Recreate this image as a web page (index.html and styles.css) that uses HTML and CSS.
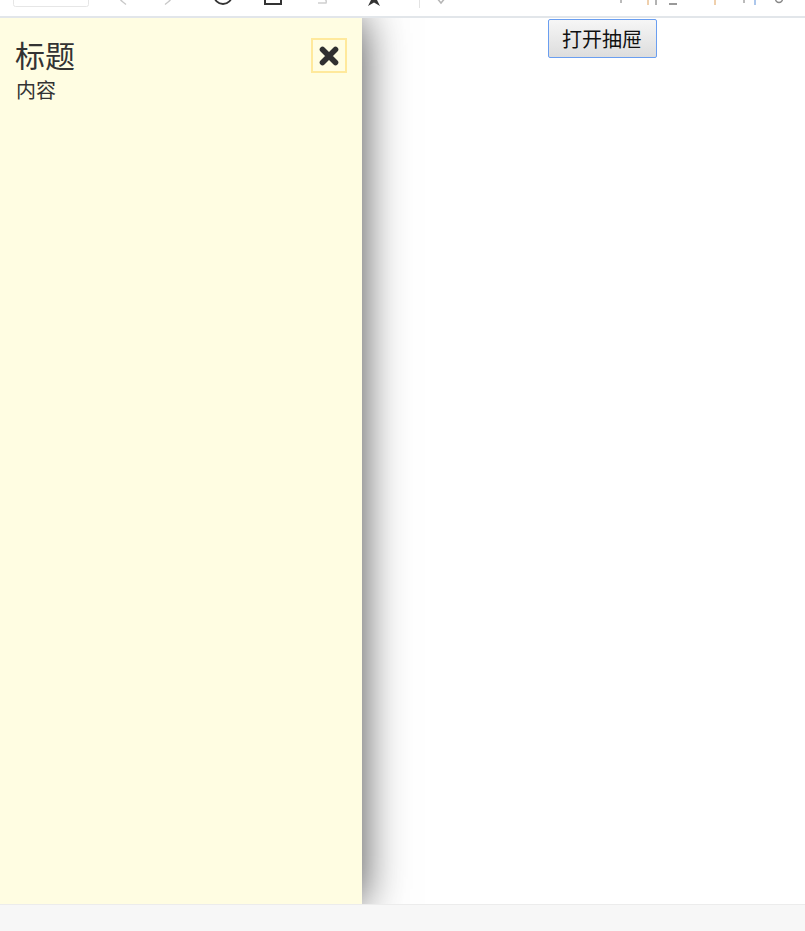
FILE: index.html
```html
<!DOCTYPE html>
<html lang="zh-CN">
<head>
<meta charset="utf-8">
<title>抽屉</title>
<link rel="stylesheet" href="styles.css">
</head>
<body>
  <div class="chrome">
    <svg class="chrome-icons" width="805" height="16" viewBox="0 0 805 16">
      <rect x="13.5" y="-10" width="75" height="16.5" rx="2" fill="none" stroke="#e6e6e6"/>
      <polyline points="127,-5 121,0.5 126,4.5" fill="none" stroke="#c8c8c8" stroke-width="1.3"/>
      <polyline points="164,-5 170,0.5 165,4.5" fill="none" stroke="#c8c8c8" stroke-width="1.3"/>
      <circle cx="223" cy="-5" r="9" fill="none" stroke="#333" stroke-width="1.8"/>
      <rect x="265" y="-12" width="16" height="16" fill="none" stroke="#333" stroke-width="2"/>
      <path d="M316 -4 Q 328 -2 326 3 L 318 3" fill="none" stroke="#cfcfcf" stroke-width="1.5"/>
      <polygon points="366,-6 371,0 368,6 374,2.5 380,6 377,0 382,-6" fill="#333"/>
      <line x1="419.5" y1="0" x2="419.5" y2="8" stroke="#e3e3e3"/>
      <path d="M436 -3 L441 3 L446 -3" fill="none" stroke="#b5b5b5" stroke-width="1.5"/>
      <line x1="621" y1="0" x2="621" y2="3" stroke="#777"/>
      <line x1="648" y1="0" x2="648" y2="5" stroke="#e0a15a"/>
      <line x1="656" y1="0" x2="656" y2="5" stroke="#666"/>
      <line x1="669" y1="4" x2="677" y2="4" stroke="#555" stroke-width="1.2"/>
      <line x1="715" y1="0" x2="715" y2="5" stroke="#e0a15a"/>
      <line x1="744" y1="0" x2="744" y2="3" stroke="#777"/>
      <line x1="755" y1="0" x2="755" y2="5" stroke="#5a8fd9"/>
      <circle cx="779" cy="-1" r="3.5" fill="none" stroke="#888" stroke-width="1.4"/>
    </svg>
  </div>

  <main class="stage">
    <aside class="drawer">
      <div class="drawer-head">
        <h1 class="drawer-title">标题</h1>
        <button class="drawer-close" type="button" aria-label="关闭">
          <svg width="22" height="22" viewBox="0 0 22 22">
            <path d="M4.5 4.5 L17.5 17.5 M17.5 4.5 L4.5 17.5" stroke="#303030" stroke-width="5.6" stroke-linecap="round"/>
          </svg>
        </button>
      </div>
      <p class="drawer-body">内容</p>
    </aside>
    <section class="content">
      <button class="open-btn" type="button">打开抽屉</button>
    </section>
  </main>

  <footer class="statusbar"></footer>
</body>
</html>
```

FILE: styles.css
```css
html, body {
  margin: 0;
  padding: 0;
  height: 100%;
}

body {
  display: flex;
  flex-direction: column;
  background: #ffffff;
  font-family: "Noto Sans CJK SC", "Noto Sans", sans-serif;
  color: #333333;
}

.chrome {
  height: 16px;
  flex: none;
  background: #ffffff;
  border-bottom: 2px solid #e2e6ea;
  overflow: hidden;
}

.chrome-icons {
  display: block;
}

.stage {
  flex: 1;
  display: flex;
  overflow: hidden;
  min-height: 0;
}

.drawer {
  width: 362px;
  flex: none;
  background: #fffde2;
  box-shadow: 0 0 42px rgba(0, 0, 0, 0.72);
  position: relative;
  z-index: 1;
}

.drawer-head {
  display: flex;
  justify-content: space-between;
  align-items: flex-start;
  padding: 19px 15px 0 15px;
}

.drawer-title {
  margin: 0;
  font-size: 30px;
  line-height: 34px;
  font-weight: normal;
  color: #333333;
}

.drawer-close {
  margin-top: 1px;
  width: 36px;
  height: 35px;
  padding: 0;
  border: 2px solid #ffe99c;
  background: transparent;
  display: flex;
  align-items: center;
  justify-content: center;
}

.drawer-close svg {
  display: block;
}

.drawer-body {
  margin: 3px 0 0 0;
  padding-left: 16px;
  font-size: 20px;
  line-height: 28px;
  color: #333333;
}

.content {
  flex: 1;
  padding: 1px 0 0 186px;
}

.open-btn {
  font-family: "Noto Sans CJK SC", "Noto Sans", sans-serif;
  font-size: 20px;
  line-height: 29px;
  color: #111111;
  padding: 4px 14px 4px 13px;
  border: 1px solid #6a9ef0;
  border-radius: 2px;
  background: linear-gradient(#f6f6f6, #dddddd);
}

.statusbar {
  height: 26px;
  flex: none;
  background: #f7f7f7;
  border-top: 1px solid #ececec;
}
```
